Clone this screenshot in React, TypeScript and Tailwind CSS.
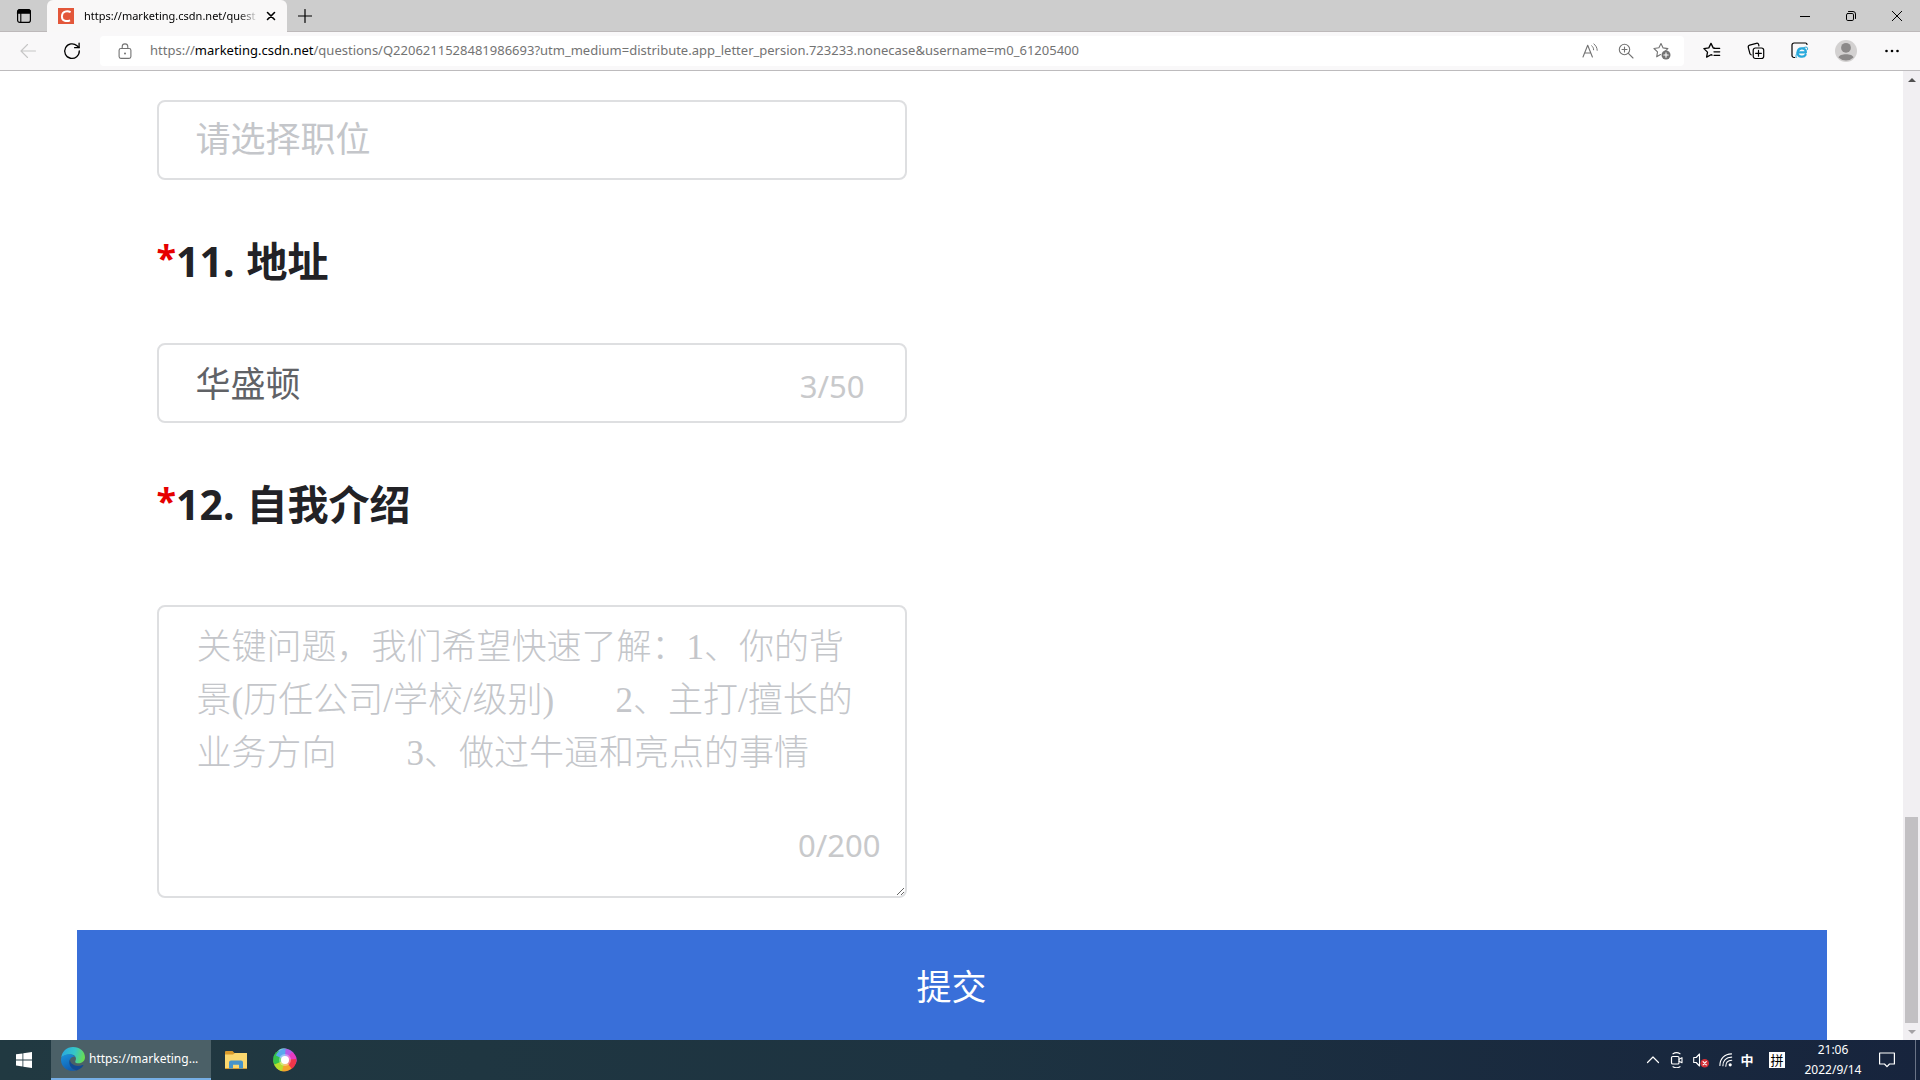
import { useState } from "react";
import type { ReactNode } from "react";

const HOST = "marketing.csdn.net";
const PATH =
  "/questions/Q2206211528481986693?utm_medium=distribute.app_letter_persion.723233.nonecase&username=m0_61205400";

// U+3000 keeps the gaps between the three prompts a full glyph wide
const INTRO_HINT =
  "关键问题，我们希望快速了解：1、你的背\n景(历任公司/学校/级别)\u3000   2、主打/擅长的\n业务方向\u3000\u30003、做过牛逼和亮点的事情";

type IconProps = { size?: number; className?: string; children: ReactNode };

function Icon({ size = 16, className = "", children }: IconProps) {
  return (
    <svg
      width={size}
      height={size}
      viewBox={`0 0 ${size} ${size}`}
      fill="none"
      stroke="currentColor"
      strokeLinecap="round"
      strokeLinejoin="round"
      aria-hidden="true"
      className={`shrink-0 ${className}`}
    >
      {children}
    </svg>
  );
}

function IconButton({ label, className = "", children }: { label: string; className?: string; children: ReactNode }) {
  return (
    <button type="button" aria-label={label} className={`flex h-full shrink-0 items-center justify-center ${className}`}>
      {children}
    </button>
  );
}

function TabStrip() {
  return (
    <div className="flex h-8 shrink-0 border-b border-[#bdb9ba] bg-[#cdcdcd] text-black">
      <IconButton label="标签页操作菜单" className="w-[47px]">
        <Icon>
          <rect x="1.6" y="1.6" width="12.8" height="12.8" rx="2.2" strokeWidth="1.2" />
          <path d="M1.6 3.6a2 2 0 0 1 2-2h8.8a2 2 0 0 1 2 2v1.6H1.6z" fill="currentColor" />
          <path d="M4.8 5v9" strokeWidth="1.1" />
        </Icon>
      </IconButton>

      <div className="-mb-px flex w-60 shrink-0 items-center rounded-t-md bg-[#f9f8f8] pr-1 pl-[11px]">
        <svg width="16" height="16" viewBox="0 0 16 16" aria-hidden="true" className="shrink-0">
          <rect width="16" height="16" fill="#e3573a" />
          <path d="M12.6 4.2C9.4 2.6 4 2.9 3.9 8.4c0 5 5 5.3 8.2 3.9" fill="none" stroke="#fff" strokeWidth="1.9" />
        </svg>
        <span className="ml-[10px] flex-1 text-[11px] whitespace-nowrap [mask-image:linear-gradient(to_right,black_88%,transparent)]">
          https://{HOST}/quest
        </span>
        <IconButton label="关闭标签页" className="w-6">
          <Icon size={10}>
            <path d="M1.5 1.5l7 7M8.5 1.5l-7 7" strokeWidth="1.6" />
          </Icon>
        </IconButton>
      </div>

      <IconButton label="新建标签页" className="w-9">
        <Icon size={14}>
          <path d="M7 .5v13M.5 7h13" strokeWidth="1.2" />
        </Icon>
      </IconButton>

      <div className="ml-auto flex">
        <IconButton label="最小化" className="w-[46px]">
          <Icon size={10}>
            <path d="M0 5.5h10" strokeWidth="1" />
          </Icon>
        </IconButton>
        <IconButton label="还原" className="w-[46px]">
          <Icon size={10}>
            <rect x=".5" y="2.5" width="7" height="7" rx="1.3" strokeWidth="1" />
            <path d="M2.5.5H7A2.5 2.5 0 0 1 9.5 3v4.5" strokeWidth="1" />
          </Icon>
        </IconButton>
        <IconButton label="关闭" className="w-[46px]">
          <Icon size={10}>
            <path d="M.3.3l9.4 9.4M9.7.3L.3 9.7" strokeWidth="1" />
          </Icon>
        </IconButton>
      </div>
    </div>
  );
}

function AddressBar() {
  return (
    <div className="flex h-[39px] shrink-0 items-center border-b border-[#bdbbbd] bg-[#f9f8f9] text-black">
      <IconButton label="后退" className="w-14 text-[#c6c6c6]">
        <Icon>
          <path d="M15.5 8H1M7.5 1.5L1 8l6.5 6.5" strokeWidth="1.1" />
        </Icon>
      </IconButton>
      <IconButton label="刷新" className="w-8">
        <Icon size={18}>
          <path d="M16.3 8.8A7.3 7.3 0 1 1 14 3.8L16 5.6" strokeWidth="1.3" />
          <path d="M16.1 1.2v4.5h-4.5" strokeWidth="1.3" />
        </Icon>
      </IconButton>

      <div className="ml-3 flex h-[30px] min-w-0 flex-1 items-center rounded-sm bg-white pr-1 text-[#737373]">
        <IconButton label="查看站点信息" className="w-[50px]">
          <Icon size={16}>
            <rect x="2.1" y="5.5" width="11.8" height="9.9" rx="1.8" strokeWidth="1.1" />
            <path d="M5.2 5.3V3.7a2.8 2.8 0 0 1 5.6 0v1.6" strokeWidth="1.1" />
            <circle cx="8" cy="10.5" r="1" fill="currentColor" stroke="none" />
          </Icon>
        </IconButton>
        <a href={`https://${HOST}${PATH}`} className="min-w-0 flex-1 truncate pr-4 text-[13px]">
          https://<span className="text-black">{HOST}</span>
          {PATH}
        </a>
        <IconButton label="大声朗读" className="w-9">
          <Icon>
            <path d="M1 14L5.7 2.2 10.4 14M2.6 10h6.2" strokeWidth="1.1" />
            <path d="M9.7 2.8c1.3 1 1.9 2.3 1.9 4M11.9 1c2 1.5 3.2 3.6 3.3 6.3" strokeWidth="1" />
          </Icon>
        </IconButton>
        <IconButton label="缩放" className="w-9">
          <Icon>
            <circle cx="6.5" cy="6.5" r="5.2" strokeWidth="1.1" />
            <path d="M10.4 10.4l4.6 4.6M6.5 4v5M4 6.5h5" strokeWidth="1.1" />
          </Icon>
        </IconButton>
        <IconButton label="将此页面添加到收藏夹" className="w-9">
          <Icon size={18}>
            <path
              d="M8 1.5l2.1 4.4 4.8.7-3 2.7M7.5 12.6l-3.8 2.2.8-4.9L1 6.5l4.9-.7L8 1.5"
              strokeWidth="1.1"
            />
            <circle cx="13" cy="13" r="4.5" fill="currentColor" stroke="none" />
            <path d="M13 10.8v4.4M10.8 13h4.4" stroke="#fff" strokeWidth="1.1" />
          </Icon>
        </IconButton>
      </div>

      <div className="flex h-full px-[6px]">
        <IconButton label="收藏夹" className="w-11">
          <Icon size={18}>
            <path
              d="M10.2 5.9L8 1.4 5.8 5.9.9 6.6l3.6 3.5-.9 5 4.4-2.4 1 .5M10.2 5.9l1.2.2"
              strokeWidth="1.3"
            />
            <path d="M11 6.3h5.7M11 9.8h5.7M11 13.3h5.7" strokeWidth="1.3" />
          </Icon>
        </IconButton>
        <IconButton label="集锦" className="w-11">
          <Icon size={18}>
            <rect x="6.2" y="6" width="10.5" height="10.5" rx="2.2" strokeWidth="1.2" />
            <path
              d="M4.2 12.9L3 11.9 1.3 5.5a2 2 0 0 1 1.4-2.4L9.3 1.3a2 2 0 0 1 2.4 1.4l.2 1.1"
              strokeWidth="1.2"
            />
            <path d="M11.5 8.4v5.8M8.6 11.3h5.8" strokeWidth="1.2" />
          </Icon>
        </IconButton>
        <IconButton label="Internet Explorer 模式" className="w-11">
          <Icon size={18}>
            <path d="M3.8 15.5H3a2 2 0 0 1-2-2V3a2 2 0 0 1 2-2h11.5A1.5 1.5 0 0 1 16 2.5" strokeWidth="1.2" />
            <path
              d="M6.4 10.4h8.5c0-5-7.8-5.5-8.3-.2-.3 5.3 6.4 5.6 8 2.5"
              stroke="#27a9dc"
              strokeWidth="2.2"
            />
            <path d="M5.7 15.6c-3-.8 1.8-9.8 9.2-10.5 2-.1 2 1.4 1.4 2.6" stroke="#27a9dc" strokeWidth="1" />
          </Icon>
        </IconButton>
        <IconButton label="个人" className="w-12">
          <svg width="22" height="22" viewBox="0 0 22 22" aria-hidden="true">
            <circle cx="11" cy="11" r="11" fill="#d3d1d1" />
            <circle cx="11" cy="7.8" r="4.9" fill="#8b8989" />
            <path d="M3.5 17.5c.6-4.5 14.4-4.5 15 0A10.8 10.8 0 0 1 3.5 17.5z" fill="#8b8989" />
          </svg>
        </IconButton>
        <IconButton label="设置及其他" className="w-11">
          <Icon>
            <g fill="currentColor" stroke="none">
              <circle cx="2.5" cy="8" r="1.3" />
              <circle cx="8" cy="8" r="1.3" />
              <circle cx="13.5" cy="8" r="1.3" />
            </g>
          </Icon>
        </IconButton>
      </div>
    </div>
  );
}

function Question({ id, no, title, className = "" }: { id: string; no: number; title: string; className?: string }) {
  return (
    <label htmlFor={id} className={`flex h-[60px] text-[41px] leading-[60px] font-bold text-[#222226] ${className}`}>
      <span className="text-4xl leading-[54px] text-[#e60000]">*</span>
      <span>{no}.</span>
      <span className="ml-3">{title}</span>
    </label>
  );
}

function QuestionForm() {
  const [job, setJob] = useState("");
  const [address, setAddress] = useState("华盛顿");
  const [intro, setIntro] = useState("");

  const box = "block w-full rounded-lg border-2 border-[#dedfe1] bg-white text-[35px] placeholder:text-[#c4c6ca] outline-none";

  return (
    <form onSubmit={(e) => e.preventDefault()} className="mx-auto max-w-[1750px] pt-[29px]">
      <div className="px-20">
        <div className="max-w-[750px]">
          <input
            aria-label="职位"
            readOnly
            value={job}
            onClick={() => setJob("")}
            placeholder="请选择职位"
            className={`${box} h-20 px-[37px] pb-1`}
          />

          <Question id="address" no={11} title="地址" className="mt-[51px] mb-[52px]" />
          <div className="relative">
            <input
              id="address"
              maxLength={50}
              value={address}
              onChange={(e) => setAddress(e.target.value)}
              className={`${box} h-20 pr-32 pb-1 pl-[37px] text-[#606266]`}
            />
            <span className="absolute right-[42px] bottom-[14px] text-[31px] leading-[46px] text-[#c8c9cb]">
              {address.length}/50
            </span>
          </div>

          <Question id="intro" no={12} title="自我介绍" className="mt-[51px] mb-[71px]" />
          <div className="relative">
            <textarea
              id="intro"
              maxLength={200}
              value={intro}
              onChange={(e) => setIntro(e.target.value)}
              placeholder={INTRO_HINT}
              className={`${box} h-[293px] resize-y py-[14px] pr-5 pl-[38px] font-['Liberation_Serif','Noto_Sans_CJK_SC',serif] leading-[53px] font-light`}
            />
            <span className="absolute right-[26px] bottom-[30px] text-[31px] leading-[46px] text-[#c8c9cb]">
              {intro.length}/200
            </span>
          </div>
        </div>
      </div>

      <button type="submit" className="mt-8 block h-[114px] w-full bg-[#396fd9] text-[35px] text-white">
        提交
      </button>
    </form>
  );
}

function ScrollRail() {
  return (
    <div className="flex w-[17px] shrink-0 flex-col items-center bg-[#f1eff2] text-[#505050]" aria-hidden="true">
      <div className="flex h-[17px] items-center">
        <svg width="8" height="4" viewBox="0 0 8 4">
          <path d="M0 4l4-4 4 4z" fill="currentColor" />
        </svg>
      </div>
      <div className="flex w-[13px] flex-1 flex-col justify-end">
        <div className="h-[22%] bg-[#c2c0c3]" />
      </div>
      <div className="flex h-[17px] items-center text-[#a5a3a6]">
        <svg width="8" height="4" viewBox="0 0 8 4">
          <path d="M0 0l4 4 4-4z" fill="currentColor" />
        </svg>
      </div>
    </div>
  );
}

function EdgeLogo() {
  return (
    <svg width="24" height="24" viewBox="0 0 24 24" aria-hidden="true" className="shrink-0">
      <defs>
        <linearGradient id="edge-top" x1="0" y1="0.3" x2="1" y2="0.5">
          <stop offset="0" stopColor="#2aa7e0" />
          <stop offset="0.55" stopColor="#35c6c8" />
          <stop offset="1" stopColor="#6ade4f" />
        </linearGradient>
        <linearGradient id="edge-body" x1="0.2" y1="0" x2="0.6" y2="1">
          <stop offset="0" stopColor="#1b8fd8" />
          <stop offset="1" stopColor="#0f5cb0" />
        </linearGradient>
      </defs>
      <path d="M.2 11C.8 4.6 5.7 0 12 0c7 0 12 4.7 12 10.2 0 3.6-2.8 6-6.3 6-2.6 0-4.2-.9-3.3-2.3 1.7-2.6-.3-6.3-4.4-6.3C5.5 7.6 1.5 9 .2 11z" fill="url(#edge-top)" />
      <path d="M.1 11.6c.9-3 4.6-4.7 9.2-4.4 2.3.2 4.1 1.3 5 2.7-1.6-.5-5.8.4-5.8 5 0 4.4 3.3 7.9 6.9 8.5C7.3 25.3-.8 20.2.1 11.6z" fill="url(#edge-body)" />
      <path d="M8.9 12.6C6.7 17.8 11.2 23.4 15.7 23.4c2.7-.8 5-2.4 6.6-4.8.3-.5-.2-.8-.6-.6-5.9 2.7-12.8-.4-12.8-5.4z" fill="#124a93" />
    </svg>
  );
}

function Taskbar() {
  return (
    <footer className="flex h-10 shrink-0 items-stretch bg-linear-to-r from-[#213941] via-[#1d3341] to-[#17243d] text-white">
      <IconButton label="开始" className="w-[51px] pr-[3px]">
        <svg width="16" height="16" viewBox="0 0 16 16" fill="currentColor" aria-hidden="true">
          <path d="M0 2.3l6.5-.9v6.1H0zM7.3 1.3L16 0v7.5H7.3zM0 8.4h6.5v6.1L0 13.6zM7.3 8.4H16V16l-8.7-1.3z" />
        </svg>
      </IconButton>
      <button type="button" className="flex w-40 shrink-0 items-center border-b-2 border-[#76aee4] bg-[#4b6067] pl-[10px]">
        <EdgeLogo />
        <span className="ml-1 text-xs">https://marketing...</span>
      </button>
      <IconButton label="文件资源管理器" className="w-[50px]">
        <svg width="22" height="20" viewBox="0 0 22 20" aria-hidden="true">
          <path d="M0 2a1 1 0 0 1 1-1h6.500l2 2H22v16H0z" fill="#d99a2b" />
          <path d="M0 4.500h8l2-1.500h12v15H0z" fill="#fbd86f" />
          <path d="M4 18.500v-6a2 2 0 0 1 2-2h10a2 2 0 0 1 2 2v6h-4v-3.700H8v3.700z" fill="#4694cb" />
        </svg>
      </IconButton>
      <IconButton label="浏览器" className="w-12">
        <svg width="24" height="24" viewBox="0 0 24 24" aria-hidden="true">
          <path d="M12 12L3.5 4.5C7-1 14-1 17 3.5z" fill="#7cc9d8" />
          <path d="M12 12L10 1c6.5-1.5 11 3 12 7.5z" fill="#b35be8" />
          <path d="M12 12l7-8c5.5 3.5 6 10 2.5 13z" fill="#e63bc0" />
          <path d="M12 12l11-1c1 6.5-4 11.5-9.5 11.5z" fill="#f0364a" />
          <path d="M12 12l6.5 8.5C13.5 25 6.5 24 4 20z" fill="#f4a32c" />
          <path d="M12 12l-3 11C3.5 22 0 17 .5 12z" fill="#b8de2e" />
          <path d="M12 12L1.5 16.5C-1.5 11 .5 5 5.5 3z" fill="#35c24c" />
          <path d="M12 12L3 7.5C4.5 3.5 8 1 12.5 1z" fill="#5aa8ee" />
          <circle cx="12" cy="12" r="6" fill="#fff" opacity="0.35" />
          <circle cx="12" cy="12" r="4" fill="#fff" />
        </svg>
      </IconButton>

      <div className="ml-auto flex items-center">
        <IconButton label="显示隐藏的图标" className="w-[25px]">
          <Icon size={14}>
            <path d="M1.5 9.5L7 4l5.5 5.5" strokeWidth="1.2" />
          </Icon>
        </IconButton>
        <IconButton label="立即开会" className="w-6">
          <Icon>
            <rect x="2.5" y="4.5" width="7.5" height="7.5" rx="1.3" strokeWidth="1.2" />
            <path d="M10 7.3l3-1.6v5.1l-3-1.6M4 1.8c2-1.4 5-1.4 7 0M4 14.7c2 1.2 5 1.2 7 0" strokeWidth="1.1" />
          </Icon>
        </IconButton>
        <IconButton label="音量" className="w-6">
          <Icon>
            <path d="M.7 5.5h2.5L6.5 2v12L3.2 10.5H.7z" strokeWidth="1.1" />
            <circle cx="11.7" cy="11.3" r="4.3" fill="#d32f36" stroke="none" />
            <path d="M10.1 9.7l3.2 3.2M13.3 9.7l-3.2 3.2" stroke="#fff" strokeWidth="1.2" />
          </Icon>
        </IconButton>
        <IconButton label="网络" className="w-[26px]">
          <Icon>
            <path d="M1.9 13.5C2 6.8 6.5 2 13.5 1.9M4.9 13.8C4.8 8.7 8 5.2 13.7 5.1M7.8 14.2c0-3.5 2-5.9 5.9-6" strokeWidth="1.1" />
            <circle cx="12.2" cy="12.8" r="1.6" fill="currentColor" stroke="none" />
          </Icon>
        </IconButton>
        <button type="button" className="w-4 text-center text-[13px] leading-4 font-bold">
          中
        </button>
        <button
          type="button"
          className="mx-[14px] flex size-4 items-center justify-center bg-white text-[13px] leading-4 text-black"
        >
          拼
        </button>
        <time dateTime="2022-09-14T21:06" className="w-[68px] text-center text-xs leading-5 whitespace-nowrap">
          21:06
          <br />
          2022/9/14
        </time>
        <IconButton label="通知" className="w-11 pr-1">
          <Icon>
            <path d="M.6 1h14.8v11h-4.9l-2.5 2.7L5.5 12H.6z" strokeWidth="1.2" />
          </Icon>
        </IconButton>
        <button type="button" aria-label="显示桌面" className="ml-1 h-full w-[5px] border-l border-[#6a7386]" />
      </div>
    </footer>
  );
}

export default function App() {
  return (
    <div className="flex h-screen flex-col overflow-hidden bg-white font-['Noto_Sans','Noto_Sans_CJK_SC',sans-serif]">
      <TabStrip />
      <AddressBar />
      <div className="flex min-h-0 flex-1">
        <main className="min-w-0 flex-1 overflow-hidden">
          <QuestionForm />
        </main>
        <ScrollRail />
      </div>
      <Taskbar />
    </div>
  );
}
